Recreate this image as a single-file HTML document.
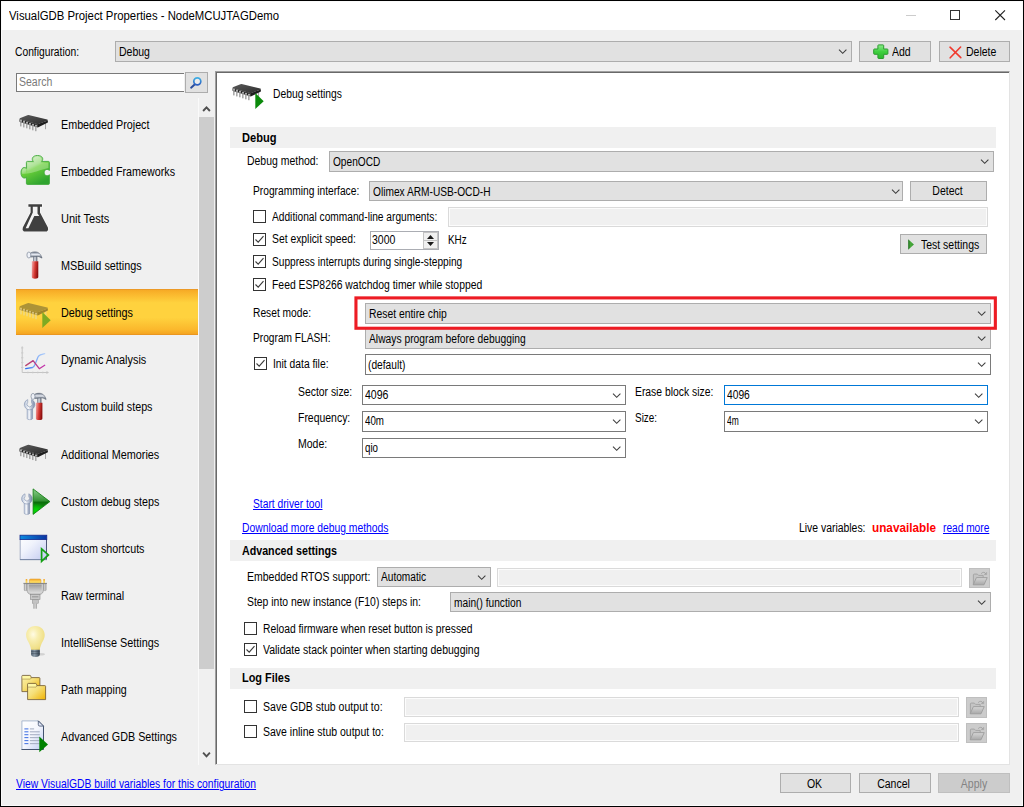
<!DOCTYPE html>
<html lang="en">
<head>
<meta charset="utf-8">
<title>VisualGDB Project Properties - NodeMCUJTAGDemo</title>
<style>
*{box-sizing:border-box;margin:0;padding:0}
html,body{width:1024px;height:807px;overflow:hidden;background:#f0f0f0}
body{font-family:"Liberation Sans",sans-serif;font-size:11px;color:#000;position:relative}
.abs,.t,.cb,.combo,.tb,.btn,.bar,.ico,.item{position:absolute}
.t{white-space:nowrap;line-height:13px;height:13px;font-size:12px;transform:scaleX(var(--k,0.875));transform-origin:0 0;display:inline-block}
.tc{left:0;right:0;top:3px;text-align:center;transform-origin:50% 0;display:block}
svg{overflow:visible}
#win{position:absolute;left:0;top:0;width:1024px;height:807px;border:1px solid #000;pointer-events:none;z-index:50;box-shadow:inset 0 0 0 1px #fafafa}
#title{position:absolute;left:0;top:0;width:1024px;height:30px;background:#fff}
#title .t{--k:0.97;font-size:12px;left:9px;top:9px;line-height:15px;height:15px}
.combo{background:#e1e1e1;border:1px solid #adadad;height:21px}
.combo.w{background:#fff;border-color:#7a7a7a}
.combo.f{background:#fff;border-color:#0078d7}
.combo .t{left:3px;top:3px}
.combo.w .t,.combo.f .t{left:2px}
.combo svg{position:absolute;right:4px;top:7px}
.tb{background:#f0f0f0;border:1px solid #dadada;height:19px;box-shadow:inset 0 0 0 1px #fcfcfc}
.btn{background:#e1e1e1;border:1px solid #adadad;height:21px;text-align:center;line-height:19px;white-space:nowrap}
.btn.dis{background:#cccccc;border-color:#bfbfbf;color:#838383}
.cb{width:13px;height:13px;background:#fff;border:1px solid #333}
.cb svg{position:absolute;left:0;top:0}
.bar{left:230px;width:766px;height:21px;background:#f0f0f0}
.bar .t{left:12px;top:4px;font-weight:bold}
a.t{color:#0000ff;text-decoration:underline}
.item{left:16px;width:183px;height:47px}
.item .t{left:45px;top:17px}
.item.sel{height:46px;width:182px;box-shadow:inset 0 1px 0 #ec9a26,inset 0 -1px 0 #ea9620;background:linear-gradient(#f5a623 0,#f9b32b 8%,#ffd23e 30%,#ffd23e 62%,#fbb82c 88%,#f3a01e 100%)}
.ico{left:3px;top:7px;width:32px;height:32px}
</style>
</head>
<body>
<svg width="0" height="0" style="position:absolute"><defs>
<linearGradient id="chipTop" x1="0" y1="0" x2="1" y2="1"><stop offset="0" stop-color="#5a5a5a"/><stop offset="1" stop-color="#2c2c2c"/></linearGradient>
<linearGradient id="pin" x1="0" y1="0" x2="1" y2="0"><stop offset="0" stop-color="#b4b4b4"/><stop offset="0.45" stop-color="#a0a0a0"/><stop offset="1" stop-color="#ececec"/></linearGradient>
<linearGradient id="pz" x1="0.1" y1="0" x2="0.6" y2="1"><stop offset="0" stop-color="#e4f6dc"/><stop offset="0.42" stop-color="#8fd870"/><stop offset="0.5" stop-color="#6bcf3a"/><stop offset="1" stop-color="#2fa42f"/></linearGradient>
<linearGradient id="hr" x1="0" y1="0" x2="1" y2="0.25"><stop offset="0" stop-color="#f4b0b0"/><stop offset="0.55" stop-color="#d63a34"/><stop offset="1" stop-color="#8e1010"/></linearGradient>
<linearGradient id="hs" x1="0" y1="0" x2="1" y2="0"><stop offset="0" stop-color="#6a7280"/><stop offset="0.45" stop-color="#dfe4ec"/><stop offset="1" stop-color="#4a5260"/></linearGradient>
<linearGradient id="hh" x1="0" y1="0" x2="0" y2="1"><stop offset="0" stop-color="#6e7888"/><stop offset="0.42" stop-color="#e4e8f0"/><stop offset="1" stop-color="#465060"/></linearGradient>
<linearGradient id="wr" x1="0" y1="0" x2="1" y2="0"><stop offset="0" stop-color="#b8c4d8"/><stop offset="0.4" stop-color="#f6f8fc"/><stop offset="1" stop-color="#7484a4"/></linearGradient>
<linearGradient id="pl1" x1="0" y1="0" x2="0" y2="1"><stop offset="0" stop-color="#8ed08e"/><stop offset="0.49" stop-color="#2f8f2f"/><stop offset="0.5" stop-color="#0a6a0a"/><stop offset="1" stop-color="#19b419"/></linearGradient>
<radialGradient id="pl2" cx="0.15" cy="0.72" r="0.6"><stop offset="0" stop-color="#00dc00"/><stop offset="1" stop-color="#00dc00" stop-opacity="0"/></radialGradient>
<linearGradient id="wtb" x1="0" y1="0" x2="1" y2="0"><stop offset="0" stop-color="#0a8ae0"/><stop offset="1" stop-color="#0a34a0"/></linearGradient>
<linearGradient id="wbd" x1="0" y1="0" x2="1" y2="1"><stop offset="0" stop-color="#ffffff"/><stop offset="0.4" stop-color="#f0f3fc"/><stop offset="1" stop-color="#c2caf0"/></linearGradient>
<linearGradient id="gold" x1="0" y1="0" x2="0" y2="1"><stop offset="0" stop-color="#f4a428"/><stop offset="0.75" stop-color="#ffe468"/><stop offset="1" stop-color="#f8c040"/></linearGradient>
<linearGradient id="sb" x1="0" y1="0" x2="0" y2="1"><stop offset="0" stop-color="#9c9c9c"/><stop offset="1" stop-color="#dcdcdc"/></linearGradient>
<linearGradient id="sb2" x1="0" y1="0" x2="1" y2="0"><stop offset="0" stop-color="#a4a4a4"/><stop offset="0.5" stop-color="#d4d4d4"/><stop offset="1" stop-color="#a0a0a0"/></linearGradient>
<radialGradient id="bulb" cx="0.38" cy="0.35" r="0.75"><stop offset="0" stop-color="#fffbe4"/><stop offset="0.35" stop-color="#f8eeb0"/><stop offset="0.8" stop-color="#f0e088"/><stop offset="1" stop-color="#e6cf6c"/></radialGradient>
<linearGradient id="bbase" x1="0" y1="0" x2="1" y2="0"><stop offset="0" stop-color="#5a6a78"/><stop offset="0.4" stop-color="#8a9aa8"/><stop offset="1" stop-color="#34424e"/></linearGradient>
<linearGradient id="fld" x1="0" y1="0" x2="1" y2="1"><stop offset="0" stop-color="#fbf3b0"/><stop offset="0.45" stop-color="#f6e07a"/><stop offset="1" stop-color="#f0b200"/></linearGradient>
<linearGradient id="doc" x1="0" y1="0" x2="1" y2="1"><stop offset="0" stop-color="#ffffff"/><stop offset="0.5" stop-color="#f4f6fd"/><stop offset="1" stop-color="#bccaf2"/></linearGradient>
</defs></svg>
<div id="title"><span class="t" style="--k:0.9452">VisualGDB Project Properties - NodeMCUJTAGDemo</span>
<svg class="abs" style="left:906px;top:15px" width="10" height="1"><rect width="10" height="1" fill="#cccccc"/></svg>
<svg class="abs" style="left:950px;top:10px" width="10" height="10"><rect x="0.5" y="0.5" width="9" height="9" fill="none" stroke="#333" stroke-width="1"/></svg>
<svg class="abs" style="left:995px;top:10px" width="11" height="11"><path d="M0.3 0.3 L10 10 M10 0.3 L0.3 10" stroke="#222" stroke-width="1.1" fill="none"/></svg>
</div>
<span class="t" style="--k:0.8565;left:15px;top:46px">Configuration:</span>
<div class="combo" style="left:115px;top:41px;width:737px"><span class="t" style="left:3px;top:4px">Debug</span><svg width="9" height="6" viewBox="0 0 9 6"><path d="M1 0.6 L4.7 4.3 L8.4 0.6" fill="none" stroke="#3c3c3c" stroke-width="1.05"/></svg></div>
<div class="btn" style="left:859px;top:41px;width:72px"><svg class="abs" style="left:13px;top:2px" width="16" height="16" viewBox="0 0 16 16"><defs><linearGradient id="addg" x1="0" y1="0" x2="0" y2="1"><stop offset="0" stop-color="#8cec8c"/><stop offset="0.5" stop-color="#3fcf3f"/><stop offset="1" stop-color="#2cb62c"/></linearGradient></defs><path d="M5.6 0.9 H10 Q10.7 0.9 10.7 1.6 V5 H14.2 Q14.9 5 14.9 5.7 V9.6 Q14.9 10.3 14.2 10.3 H10.7 V13.8 Q10.7 14.5 10 14.5 H5.6 Q4.9 14.5 4.9 13.8 V10.3 H1.4 Q0.7 10.3 0.7 9.6 V5.7 Q0.7 5 1.4 5 H4.9 V1.6 Q4.9 0.9 5.6 0.9z" fill="url(#addg)" stroke="#2a9c2e" stroke-width="1"/></svg><span class="t" style="left:32px;top:4px">Add</span></div>
<div class="btn" style="left:939px;top:41px;width:71px"><svg class="abs" style="left:9px;top:4px" width="13" height="13" viewBox="0 0 13 13"><path d="M1 1.2 L11.8 11.6 M11.6 1 L1.2 11.8" stroke="#f03a2e" stroke-width="1.6" fill="none" stroke-linecap="round"/></svg><span class="t" style="left:26px;top:4px">Delete</span></div>
<div class="abs" style="left:16px;top:73px;width:168px;height:19px;background:#fff;border:1px solid #7a7a7a;border-right:none"><span class="t" style="left:2px;top:2px;color:#7a7a7a">Search</span></div>
<div class="abs" style="left:185px;top:72px;width:23px;height:21px;background:#e1e1e1;border:1px solid #adadad"><svg class="abs" style="left:3px;top:3px" width="14" height="14" viewBox="0 0 14 14"><defs><linearGradient id="mg" x1="0" y1="0" x2="0" y2="1"><stop offset="0" stop-color="#3fb0e4"/><stop offset="1" stop-color="#2c5cc0"/></linearGradient></defs><path d="M5.9 8.2 L2.1 11.7" stroke="#2a4c9c" stroke-width="1.9" stroke-linecap="round"/><circle cx="8.3" cy="5.3" r="3.5" fill="#ececec" stroke="url(#mg)" stroke-width="1.7"/></svg></div>
<div class="item" style="top:101px"><svg class="ico" viewBox="0 0 32 32"><rect x="1.0" y="12.2" width="2" height="6.2" fill="url(#pin)" opacity="1"/><rect x="4.0" y="13.2" width="2" height="6.2" fill="url(#pin)" opacity="1"/><rect x="7.0" y="14.1" width="2" height="6.2" fill="url(#pin)" opacity="1"/><rect x="10.0" y="15.1" width="2" height="6.2" fill="url(#pin)" opacity="1"/><rect x="13.0" y="16.1" width="2" height="6.2" fill="url(#pin)" opacity="1"/><rect x="16.0" y="17.0" width="2" height="6.2" fill="url(#pin)" opacity="1"/><rect x="26.0" y="14.6" width="1.5" height="6.6" fill="url(#pin)" opacity="1"/><path d="M0.5 11.2 L18.8 16.0 L18.8 19.6 L0.5 13.8z" fill="#262626"/><path d="M18.8 16.0 L28.9 12.4 L28.9 14.6 L18.8 19.6z" fill="#1e1e1e"/><path d="M0.5 11.2 Q0.4 10.4 1.4 10.1 L8.4 7.3 Q9.4 6.9 10.6 7.3 L28.2 11.6 Q29.2 12 28.9 12.6 L18.8 16.2z" fill="url(#chipTop)"/><rect x="1.0" y="11.9" width="2" height="1.9" fill="#d4d4d4" opacity="0.75"/><rect x="4.0" y="12.9" width="2" height="1.9" fill="#d4d4d4" opacity="0.75"/><rect x="7.0" y="13.8" width="2" height="1.9" fill="#d4d4d4" opacity="0.75"/><rect x="10.0" y="14.8" width="2" height="1.9" fill="#d4d4d4" opacity="0.75"/><rect x="13.0" y="15.8" width="2" height="1.9" fill="#d4d4d4" opacity="0.75"/><rect x="16.0" y="16.8" width="2" height="1.9" fill="#d4d4d4" opacity="0.75"/></svg><span class="t" style="--k:0.8963;top:18px">Embedded Project</span></div>
<div class="item" style="top:148px"><svg class="ico" viewBox="0 0 32 32"><path d="M8.4 6.4 H14.3 C12.2 4.4 13.2 0.5 18.5 0.5 C23.8 0.5 24.8 4.4 22.7 6.4 H29.4 Q30.4 6.4 30.4 7.4 V15.4 C28.4 13.6 25.2 14.3 25.2 17.6 C25.2 20.9 28.4 21.5 30.4 19.8 V28.4 Q30.4 29.4 29.4 29.4 H8.4 Q7.4 29.4 7.4 28.4 V22.2 C5.4 24.2 2 22.8 2 17.7 C2 12.6 5.4 11.4 7.4 13.3 V7.4 Q7.4 6.4 8.4 6.4z" fill="url(#pz)" stroke="#3fa83a" stroke-width="0.9"/><path d="M8.4 7.4 H15.4 C13.6 5 14.6 1.6 18.5 1.6 C22.4 1.6 23.4 5 21.6 7.4 H29.4 V13 C22 14.5 14 18 8 18.5 L7.4 14.6 C5.6 12.6 3 13.6 3 17.6 L3.4 19 C5 19 6.6 18.8 8 18.5z" fill="#ffffff" opacity="0.28"/></svg><span class="t" style="--k:0.8949;top:18px">Embedded Frameworks</span></div>
<div class="item" style="top:195px"><svg class="ico" viewBox="0 0 32 32"><path d="M9.4 2.2 H23 V4.7 H21 V10.4 L28.9 25.4 Q29.8 27.6 27.8 29.5 H4.9 Q2.9 27.6 3.8 25.4 L11.6 10.4 V4.7 H9.4z" fill="#404040" stroke="#fafafa" stroke-width="1.2" paint-order="stroke"/><path d="M13.8 4.7 H18.5 V11.4 L20.3 13.9 H15.3 L9.4 26.3 H6.7 L13.8 10.4z" fill="#f4f4f4"/></svg><span class="t" style="--k:0.9196;top:18px">Unit Tests</span></div>
<div class="item" style="top:242px"><svg class="ico" viewBox="0 0 32 32"><g transform="translate(0 0)"><path d="M14.1 5 H18.3 V12.6 H14.1z" fill="url(#hs)"/><path d="M11.4 4.2 C13 3 14.4 2.9 16 2.9 C19.4 2.8 21.8 5 23 9.1 C21.4 8.2 19.6 7.4 18.3 7.4 L14.1 7.8 C13 8 12 8.2 11.4 8z" fill="url(#hh)" stroke="#56606e" stroke-width="0.6"/><ellipse cx="9.9" cy="6" rx="2" ry="3" fill="#eef1f7" stroke="#7c8698" stroke-width="0.7"/><path d="M12.8 12.3 H19.3 V28 Q19.3 29.7 16 29.7 Q12.8 29.7 12.8 28z" fill="url(#hr)"/></g></svg><span class="t" style="--k:0.9035;top:18px">MSBuild settings</span></div>
<div class="item sel" style="top:289px"><svg class="ico" viewBox="0 0 32 32"><g opacity="0.55"><rect x="1.0" y="12.2" width="2" height="6.2" fill="#e8dca0" opacity="1"/><rect x="4.0" y="13.2" width="2" height="6.2" fill="#e8dca0" opacity="1"/><rect x="7.0" y="14.1" width="2" height="6.2" fill="#e8dca0" opacity="1"/><rect x="10.0" y="15.1" width="2" height="6.2" fill="#e8dca0" opacity="1"/><rect x="13.0" y="16.1" width="2" height="6.2" fill="#e8dca0" opacity="1"/><rect x="16.0" y="17.0" width="2" height="6.2" fill="#e8dca0" opacity="1"/><rect x="26.0" y="14.6" width="1.5" height="6.6" fill="#e8dca0" opacity="1"/><path d="M0.5 11.2 L18.8 16.0 L18.8 19.6 L0.5 13.8z" fill="#5a5026"/><path d="M18.8 16.0 L28.9 12.4 L28.9 14.6 L18.8 19.6z" fill="#4e4520"/><path d="M0.5 11.2 Q0.4 10.4 1.4 10.1 L8.4 7.3 Q9.4 6.9 10.6 7.3 L28.2 11.6 Q29.2 12 28.9 12.6 L18.8 16.2z" fill="#6a6032"/><rect x="1.0" y="11.9" width="2" height="1.9" fill="#d4d4d4" opacity="0.75"/><rect x="4.0" y="12.9" width="2" height="1.9" fill="#d4d4d4" opacity="0.75"/><rect x="7.0" y="13.8" width="2" height="1.9" fill="#d4d4d4" opacity="0.75"/><rect x="10.0" y="14.8" width="2" height="1.9" fill="#d4d4d4" opacity="0.75"/><rect x="13.0" y="15.8" width="2" height="1.9" fill="#d4d4d4" opacity="0.75"/><rect x="16.0" y="16.8" width="2" height="1.9" fill="#d4d4d4" opacity="0.75"/></g><path d="M23.3 16.1 L31.7 24.3 L23.3 31.9z" fill="#7eaa22"/></svg><span class="t" style="--k:0.8993;top:18px">Debug settings</span></div>
<div class="item" style="top:336px"><svg class="ico" viewBox="0 0 32 32"><path d="M3.2 3.4 V29.5 H29.2" fill="none" stroke="#c4c4c4" stroke-width="1"/><path d="M2 4.9h2.4M2 9.9h2.4M2 14.8h2.4M2 19.6h2.4M2 24.5h2.4M8.9 28.6v1.8M13.8 28.6v1.8M18.8 28.6v1.8M23.8 28.6v1.8" stroke="#cacaca" stroke-width="0.9"/><path d="M27.4 28.4 L29.4 29.5 L27.4 30.6" fill="none" stroke="#c4c4c4" stroke-width="0.8"/><defs><linearGradient id="gb" x1="0" y1="0" x2="1" y2="0"><stop offset="0" stop-color="#2a6cf0"/><stop offset="0.5" stop-color="#7aa8f6"/><stop offset="1" stop-color="#b4d0fa"/></linearGradient><linearGradient id="gm" x1="0" y1="0" x2="1" y2="0"><stop offset="0" stop-color="#b84870"/><stop offset="0.5" stop-color="#b83a84"/><stop offset="1" stop-color="#c432b0"/></linearGradient></defs><path d="M6.7 25.7 L13.6 24.5 Q15 24 16 21.6 L19 14 Q19.8 12.3 21.4 11.8 L25.7 10.6" fill="none" stroke="url(#gb)" stroke-width="1.3" stroke-linecap="round"/><path d="M6.7 22.6 L14.1 17.6 L20.3 25.7 L25.7 22.3" fill="none" stroke="url(#gm)" stroke-width="1.3" stroke-linecap="round" stroke-linejoin="round"/></svg><span class="t" style="--k:0.9066;top:18px">Dynamic Analysis</span></div>
<div class="item" style="top:383px"><svg class="ico" viewBox="0 0 32 32"><g transform="translate(4.1 0.4)"><path d="M14.1 5 H18.3 V12.6 H14.1z" fill="url(#hs)"/><path d="M11.4 4.2 C13 3 14.4 2.9 16 2.9 C19.4 2.8 21.8 5 23 9.1 C21.4 8.2 19.6 7.4 18.3 7.4 L14.1 7.8 C13 8 12 8.2 11.4 8z" fill="url(#hh)" stroke="#56606e" stroke-width="0.6"/><ellipse cx="9.9" cy="6" rx="2" ry="3" fill="#eef1f7" stroke="#7c8698" stroke-width="0.7"/><path d="M12.8 12.3 H19.3 V28 Q19.3 29.7 16 29.7 Q12.8 29.7 12.8 28z" fill="url(#hr)"/></g><path d="M8.1 18.2 V28.5 Q8.1 29.7 10.85 29.7 Q13.6 29.7 13.6 28.5 V18.2z" fill="url(#wr)" stroke="#8090ae" stroke-width="0.5"/><path d="M8.7 9.6 A5.3 5.3 0 1 0 12.5 9.6 L12.5 12.399999999999999 A2.6 2.6 0 1 1 8.7 12.399999999999999z" fill="url(#wr)" stroke="#8090ae" stroke-width="0.6"/></svg><span class="t" style="--k:0.8966;top:18px">Custom build steps</span></div>
<div class="item" style="top:430px"><svg class="ico" viewBox="0 0 32 32"><g transform="translate(0 0.75)"><rect x="1.0" y="12.2" width="2" height="6.2" fill="url(#pin)" opacity="1"/><rect x="4.0" y="13.2" width="2" height="6.2" fill="url(#pin)" opacity="1"/><rect x="7.0" y="14.1" width="2" height="6.2" fill="url(#pin)" opacity="1"/><rect x="10.0" y="15.1" width="2" height="6.2" fill="url(#pin)" opacity="1"/><rect x="13.0" y="16.1" width="2" height="6.2" fill="url(#pin)" opacity="1"/><rect x="16.0" y="17.0" width="2" height="6.2" fill="url(#pin)" opacity="1"/><rect x="26.0" y="14.6" width="1.5" height="6.6" fill="url(#pin)" opacity="1"/><path d="M0.5 11.2 L18.8 16.0 L18.8 19.6 L0.5 13.8z" fill="#262626"/><path d="M18.8 16.0 L28.9 12.4 L28.9 14.6 L18.8 19.6z" fill="#1e1e1e"/><path d="M0.5 11.2 Q0.4 10.4 1.4 10.1 L8.4 7.3 Q9.4 6.9 10.6 7.3 L28.2 11.6 Q29.2 12 28.9 12.6 L18.8 16.2z" fill="url(#chipTop)"/><rect x="1.0" y="11.9" width="2" height="1.9" fill="#d4d4d4" opacity="0.75"/><rect x="4.0" y="12.9" width="2" height="1.9" fill="#d4d4d4" opacity="0.75"/><rect x="7.0" y="13.8" width="2" height="1.9" fill="#d4d4d4" opacity="0.75"/><rect x="10.0" y="14.8" width="2" height="1.9" fill="#d4d4d4" opacity="0.75"/><rect x="13.0" y="15.8" width="2" height="1.9" fill="#d4d4d4" opacity="0.75"/><rect x="16.0" y="16.8" width="2" height="1.9" fill="#d4d4d4" opacity="0.75"/></g></svg><span class="t" style="--k:0.9037;top:19px">Additional Memories</span></div>
<div class="item" style="top:477px"><svg class="ico" viewBox="0 0 32 32"><path d="M5.2 18.400000000000002 V29.2 Q5.2 30.4 7.9 30.4 Q10.6 30.4 10.6 29.2 V18.400000000000002z" fill="url(#wr)" stroke="#8090ae" stroke-width="0.5"/><path d="M6.0 9.8 A5.3 5.3 0 1 0 9.8 9.8 L9.8 12.600000000000001 A2.6 2.6 0 1 1 6.0 12.600000000000001z" fill="url(#wr)" stroke="#8090ae" stroke-width="0.6"/><path d="M14.1 4.9 L30.9 17.6 L14.1 30.4z" fill="url(#pl1)" stroke="#0a7a0a" stroke-width="0.8" stroke-linejoin="round"/><path d="M14.5 17.6 H30.3 L14.5 29.6z" fill="url(#pl2)"/></svg><span class="t" style="--k:0.8927;top:19px">Custom debug steps</span></div>
<div class="item" style="top:524px"><svg class="ico" viewBox="0 0 32 32"><rect x="1.2" y="4.4" width="26.3" height="24.1" fill="url(#wbd)"/><path d="M1.2 8.6 V28.5" stroke="#a4aec6" stroke-width="1"/><path d="M27.5 8.6 V29" stroke="#4c5676" stroke-width="1"/><path d="M0.9 28.6 H28" stroke="#7484a4" stroke-width="1.1"/><rect x="1" y="4.2" width="26.8" height="4.4" fill="url(#wtb)" stroke="#14288c" stroke-width="0.8"/><path d="M22.6 17.9 L29.4 23.9 L22.6 30.3z" fill="#c8d4f8" fill-opacity="0.6" stroke="#14a014" stroke-width="1.7" stroke-linejoin="miter"/></svg><span class="t" style="--k:0.8942;top:19px">Custom shortcuts</span></div>
<div class="item" style="top:571px"><svg class="ico" viewBox="0 0 32 32"><rect x="6.6" y="1.1" width="1.8" height="4.2" rx="0.6" fill="url(#gold)"/><rect x="24.2" y="1.1" width="1.8" height="4.2" rx="0.6" fill="url(#gold)"/><rect x="10.4" y="1" width="11.6" height="4.4" rx="1.2" fill="url(#gold)" stroke="#e09a28" stroke-width="0.5"/><path d="M5.2 5.7 H8.1 V12 Q8.1 12.6 7.4 12.6 H5.9 Q5.2 12.6 5.2 12z" fill="url(#sb2)" stroke="#8c8c8c" stroke-width="0.4"/><path d="M24.5 5.7 H27.2 V12 Q27.2 12.6 26.5 12.6 H25.2 Q24.5 12.6 24.5 12z" fill="url(#sb2)" stroke="#8c8c8c" stroke-width="0.4"/><path d="M8.1 5.7 H24.4 V11.5 Q24.4 16.3 20.4 16.3 H12.1 Q8.1 16.3 8.1 11.5z" fill="#d2d2d2" stroke="#8a8a8a" stroke-width="0.6"/><path d="M9.8 6.6 H22.7 V11.4 Q22.7 15 19.6 15 H12.9 Q9.8 15 9.8 11.4z" fill="url(#sb)"/><path d="M4.4 5.4 H28" stroke="#7c7c7c" stroke-width="0.9"/><rect x="11.4" y="16.6" width="9.6" height="4.9" fill="#c8c8c8" stroke="#8a8a8a" stroke-width="0.6"/><rect x="13" y="18.2" width="6.4" height="1.2" fill="#9c9c9c"/><rect x="13.4" y="21.8" width="5.9" height="3.4" fill="#c4c4c4" stroke="#8a8a8a" stroke-width="0.5"/><rect x="14.3" y="25.5" width="3.7" height="5.2" fill="url(#sb2)"/></svg><span class="t" style="--k:0.9032;top:19px">Raw terminal</span></div>
<div class="item" style="top:618px"><svg class="ico" viewBox="0 0 32 32"><ellipse cx="21" cy="29.3" rx="5" ry="1.2" fill="#000" opacity="0.12"/><path d="M16.4 1 C10.2 1 7.1 5.6 7.1 10 C7.1 15.4 11.6 18.6 12.1 24.9 H20.8 C21.3 18.6 25.7 15.4 25.7 10 C25.7 5.6 22.6 1 16.4 1z" fill="url(#bulb)"/><path d="M12.1 24.7 H20.8 V29.6 Q20.8 31.9 16.5 31.9 Q12.1 31.9 12.1 29.6z" fill="url(#bbase)"/><path d="M12.1 26.6 H20.8 M12.1 28.6 H20.8" stroke="#2c3844" stroke-width="0.6" opacity="0.7"/></svg><span class="t" style="--k:0.9036;top:19px">IntelliSense Settings</span></div>
<div class="item" style="top:665px"><svg class="ico" viewBox="0 0 32 32"><path d="M2.9 4.2 Q2.9 3.4 3.7 3.4 H10.8 Q11.6 3.4 11.8 4.2 L12.200000000000001 5.6 H20.099999999999998 Q20.9 5.6 20.9 6.4 V19.599999999999998 H2.9z" fill="url(#fld)" stroke="#6c5630" stroke-width="0.8" stroke-linejoin="round"/><path d="M3.5 4.1 H11.1 V6.699999999999999 H3.5z" fill="#fffaa8" opacity="0.85"/><path d="M3.3 7.1 H11.3 L12.3 6.0" fill="none" stroke="#a08a4c" stroke-width="0.6"/><path d="M8.6 12.200000000000001 Q8.6 11.4 9.4 11.4 H16.5 Q17.299999999999997 11.4 17.5 12.200000000000001 L17.9 13.600000000000001 H25.799999999999997 Q26.6 13.600000000000001 26.6 14.4 V27.6 H8.6z" fill="url(#fld)" stroke="#6c5630" stroke-width="0.8" stroke-linejoin="round"/><path d="M9.2 12.1 H16.799999999999997 V14.7 H9.2z" fill="#fffaa8" opacity="0.85"/><path d="M9.0 15.100000000000001 H17.0 L18.0 14.0" fill="none" stroke="#a08a4c" stroke-width="0.6"/></svg><span class="t" style="--k:0.8878;top:19px">Path mapping</span></div>
<div class="item" style="top:713px"><svg class="ico" viewBox="0 0 32 32"><path d="M2.9 0.9 H19.3 L24.5 6.1 V29.5 H2.9z" fill="url(#doc)"/><path d="M2.9 29.8 V0.9 H19.3" fill="none" stroke="#a4b4cc" stroke-width="0.9"/><path d="M19.3 0.9 L24.5 6.1 V29.5 H2.5" fill="none" stroke="#42526e" stroke-width="1"/><path d="M19.3 0.9 V4.6 Q19.3 6.1 20.8 6.1 H24.5z" fill="#dfe6f6" stroke="#42526e" stroke-width="0.8"/><path d="M5.4 8.9 H9.4" stroke="#4a78e4" stroke-width="1.1"/><path d="M10.9 8.9 H15.1" stroke="#a8b0c4" stroke-width="1.1"/><path d="M5.4 11.8 H9.4" stroke="#4a78e4" stroke-width="1.1"/><path d="M10.9 11.8 H20.8" stroke="#a8b0c4" stroke-width="1.1"/><path d="M5.4 14.7 H9.4" stroke="#4a78e4" stroke-width="1.1"/><path d="M10.9 14.7 H20.8" stroke="#a8b0c4" stroke-width="1.1"/><path d="M5.4 17.6 H9.4" stroke="#4a78e4" stroke-width="1.1"/><path d="M10.9 17.6 H20.8" stroke="#a8b0c4" stroke-width="1.1"/><path d="M5.4 20.6 H9.4" stroke="#4a78e4" stroke-width="1.1"/><path d="M10.9 20.6 H20.8" stroke="#a8b0c4" stroke-width="1.1"/><path d="M5.4 23.6 H9.4" stroke="#4a78e4" stroke-width="1.1"/><path d="M10.9 23.6 H20.8" stroke="#a8b0c4" stroke-width="1.1"/><path d="M20.3 16.6 L29 24.5 L20.3 32.2z" fill="#008200"/></svg><span class="t" style="--k:0.8964;top:18px">Advanced GDB Settings</span></div>
<div class="abs" style="left:198px;top:98px;width:17px;height:667px;background:#f0f0f0;border-left:1px solid #fafafa"></div>
<div class="abs" style="left:199px;top:117px;width:15px;height:552px;background:#cdcdcd"></div>
<svg class="abs" style="left:202px;top:105px" width="9" height="7" viewBox="0 0 9 7"><path d="M1.1 6 L4.5 2.3 L7.9 6" fill="none" stroke="#505050" stroke-width="1.9"/></svg>
<svg class="abs" style="left:202px;top:751px" width="9" height="7" viewBox="0 0 9 7"><path d="M1.1 1.6 L4.5 5.3 L7.9 1.6" fill="none" stroke="#505050" stroke-width="1.9"/></svg>
<div class="abs" style="left:215px;top:71px;width:795px;height:694px;background:#fff;border:1px solid #a0a0a0;border-right-color:#e3e3e3;border-bottom-color:#e3e3e3"></div>
<div class="abs" style="left:216px;top:72px;width:793px;height:692px;border-left:1px solid #696969;border-top:1px solid #696969"></div>
<svg class="abs" style="left:231.5px;top:77px" width="32" height="32" viewBox="0 0 32 32"><rect x="1.0" y="12.2" width="2" height="6.2" fill="url(#pin)" opacity="1"/><rect x="4.0" y="13.2" width="2" height="6.2" fill="url(#pin)" opacity="1"/><rect x="7.0" y="14.1" width="2" height="6.2" fill="url(#pin)" opacity="1"/><rect x="10.0" y="15.1" width="2" height="6.2" fill="url(#pin)" opacity="1"/><rect x="13.0" y="16.1" width="2" height="6.2" fill="url(#pin)" opacity="1"/><rect x="16.0" y="17.0" width="2" height="6.2" fill="url(#pin)" opacity="1"/><rect x="26.0" y="14.6" width="1.5" height="6.6" fill="url(#pin)" opacity="1"/><path d="M0.5 11.2 L18.8 16.0 L18.8 19.6 L0.5 13.8z" fill="#262626"/><path d="M18.8 16.0 L28.9 12.4 L28.9 14.6 L18.8 19.6z" fill="#1e1e1e"/><path d="M0.5 11.2 Q0.4 10.4 1.4 10.1 L8.4 7.3 Q9.4 6.9 10.6 7.3 L28.2 11.6 Q29.2 12 28.9 12.6 L18.8 16.2z" fill="url(#chipTop)"/><rect x="1.0" y="11.9" width="2" height="1.9" fill="#d4d4d4" opacity="0.75"/><rect x="4.0" y="12.9" width="2" height="1.9" fill="#d4d4d4" opacity="0.75"/><rect x="7.0" y="13.8" width="2" height="1.9" fill="#d4d4d4" opacity="0.75"/><rect x="10.0" y="14.8" width="2" height="1.9" fill="#d4d4d4" opacity="0.75"/><rect x="13.0" y="15.8" width="2" height="1.9" fill="#d4d4d4" opacity="0.75"/><rect x="16.0" y="16.8" width="2" height="1.9" fill="#d4d4d4" opacity="0.75"/><path d="M23.3 16.1 L31.7 24.3 L23.3 31.9z" fill="#0b8a0b"/></svg>
<span class="t" style="--k:0.8618;left:273px;top:88px">Debug settings</span>
<div class="bar" style="top:127px"><span class="t" style="--k:0.9238;top:5px">Debug</span></div>
<span class="t" style="--k:0.8713;left:247px;top:155px">Debug method:</span>
<div class="combo" style="left:329px;top:151px;width:665px;height:21px"><span class="t" style="--k:0.8433;top:4px">OpenOCD</span><svg width="9" height="6" viewBox="0 0 9 6"><path d="M1 0.6 L4.7 4.3 L8.4 0.6" fill="none" stroke="#3c3c3c" stroke-width="1.05"/></svg></div>
<span class="t" style="--k:0.8519;left:253px;top:185px">Programming interface:</span>
<div class="combo" style="left:369px;top:181px;width:534px;height:20px"><span class="t" style="--k:0.8473;top:4px">Olimex ARM-USB-OCD-H</span><svg style="right:2px" width="9" height="6" viewBox="0 0 9 6"><path d="M1 0.6 L4.7 4.3 L8.4 0.6" fill="none" stroke="#3c3c3c" stroke-width="1.05"/></svg></div>
<div class="btn" style="left:910px;top:181px;width:77px;height:20px"><span class="t tc" style="right:2px">Detect</span></div>
<div class="cb" style="left:253px;top:210px"></div>
<span class="t" style="--k:0.8485;left:272px;top:211px">Additional command-line arguments:</span>
<div class="tb" style="left:448px;top:207px;width:540px;height:20px"></div>
<div class="cb" style="left:253px;top:233px"><svg width="11" height="11" viewBox="0 0 11 11"><path d="M1.5 5.5 L4.2 8.2 L9.5 2.2" fill="none" stroke="#3a3a3a" stroke-width="1.1"/></svg></div>
<span class="t" style="--k:0.8625;left:272px;top:233px">Set explicit speed:</span>
<div class="abs" style="left:370px;top:231px;width:69px;height:19px;background:#fff;border:1px solid #abadb3"><span class="t" style="left:1px;top:2px">3000</span><div class="abs" style="left:52px;top:0;width:15px;height:9px;background:#f0f0f0;border:1px solid #c4c4c4"><svg class="abs" style="left:3px;top:2px" width="7" height="4" viewBox="0 0 7 4"><path d="M0 4 L3.5 0 L7 4z" fill="#1a1a1a"/></svg></div><div class="abs" style="left:52px;top:9px;width:15px;height:8px;background:#f0f0f0;border:1px solid #c4c4c4;border-top:none"><svg class="abs" style="left:3px;top:1px" width="7" height="4" viewBox="0 0 7 4"><path d="M0 0 L3.5 4 L7 0z" fill="#1a1a1a"/></svg></div></div>
<span class="t" style="--k:0.8248;left:448px;top:234px">KHz</span>
<div class="btn" style="left:900px;top:234px;width:87px;height:20px"><svg class="abs" style="left:7px;top:4px" width="6" height="11" viewBox="0 0 6 11"><defs><linearGradient id="tsg" x1="0" y1="0" x2="1" y2="0"><stop offset="0" stop-color="#1e6e1e"/><stop offset="0.45" stop-color="#4cae3c"/><stop offset="1" stop-color="#2e8e2a"/></linearGradient></defs><path d="M0.2 0.2 L5.9 5.5 L0.2 10.8z" fill="url(#tsg)"/></svg><span class="t" style="--k:0.8725;left:20px;top:4px">Test settings</span></div>
<div class="cb" style="left:253px;top:255px"><svg width="11" height="11" viewBox="0 0 11 11"><path d="M1.5 5.5 L4.2 8.2 L9.5 2.2" fill="none" stroke="#3a3a3a" stroke-width="1.1"/></svg></div>
<span class="t" style="--k:0.8463;left:272px;top:256px">Suppress interrupts during single-stepping</span>
<div class="cb" style="left:253px;top:278px"><svg width="11" height="11" viewBox="0 0 11 11"><path d="M1.5 5.5 L4.2 8.2 L9.5 2.2" fill="none" stroke="#3a3a3a" stroke-width="1.1"/></svg></div>
<span class="t" style="--k:0.8659;left:272px;top:279px">Feed ESP8266 watchdog timer while stopped</span>
<span class="t" style="--k:0.8524;left:253px;top:307px">Reset mode:</span>
<div class="combo" style="left:365px;top:328px;width:626px;height:21px"><span class="t" style="--k:0.8568;top:4px">Always program before debugging</span><svg width="9" height="6" viewBox="0 0 9 6"><path d="M1 0.6 L4.7 4.3 L8.4 0.6" fill="none" stroke="#3c3c3c" stroke-width="1.05"/></svg></div>
<div class="abs" style="left:355px;top:297px;width:641px;height:32px;background:#fff"></div>
<svg class="abs" style="left:0;top:0" width="1024" height="400"><rect x="355.95" y="297.9" width="639.4" height="30.35" fill="none" stroke="#ed1c24" stroke-width="3.1"/></svg>
<div class="combo" style="left:365px;top:303px;width:626px;height:21px"><span class="t" style="--k:0.8634;top:4px">Reset entire chip</span><svg width="9" height="6" viewBox="0 0 9 6"><path d="M1 0.6 L4.7 4.3 L8.4 0.6" fill="none" stroke="#3c3c3c" stroke-width="1.05"/></svg></div>
<span class="t" style="--k:0.8483;left:253px;top:332px">Program FLASH:</span>
<div class="cb" style="left:254px;top:357px"><svg width="11" height="11" viewBox="0 0 11 11"><path d="M1.5 5.5 L4.2 8.2 L9.5 2.2" fill="none" stroke="#3a3a3a" stroke-width="1.1"/></svg></div>
<span class="t" style="--k:0.8576;left:273px;top:358px">Init data file:</span>
<div class="combo w" style="left:365px;top:354px;width:626px;height:21px"><span class="t" style="--k:0.8517;top:4px">(default)</span><svg width="9" height="6" viewBox="0 0 9 6"><path d="M1 0.6 L4.7 4.3 L8.4 0.6" fill="none" stroke="#3c3c3c" stroke-width="1.05"/></svg></div>
<span class="t" style="--k:0.8652;left:298px;top:386px">Sector size:</span>
<div class="combo w" style="left:362px;top:385px;width:264px;height:20px"><span class="t" style="--k:0.88;top:3px">4096</span><svg width="9" height="6" viewBox="0 0 9 6"><path d="M1 0.6 L4.7 4.3 L8.4 0.6" fill="none" stroke="#3c3c3c" stroke-width="1.05"/></svg></div>
<span class="t" style="--k:0.8633;left:635px;top:386px">Erase block size:</span>
<div class="combo f" style="left:724px;top:385px;width:264px;height:20px"><span class="t" style="--k:0.8538;top:3px">4096</span><svg width="9" height="6" viewBox="0 0 9 6"><path d="M1 0.6 L4.7 4.3 L8.4 0.6" fill="none" stroke="#3c3c3c" stroke-width="1.05"/></svg></div>
<span class="t" style="--k:0.8704;left:298px;top:412px">Frequency:</span>
<div class="combo w" style="left:362px;top:411px;width:264px;height:21px"><span class="t" style="--k:0.8139;top:3px">40m</span><svg width="9" height="6" viewBox="0 0 9 6"><path d="M1 0.6 L4.7 4.3 L8.4 0.6" fill="none" stroke="#3c3c3c" stroke-width="1.05"/></svg></div>
<span class="t" style="--k:0.8281;left:635px;top:412px">Size:</span>
<div class="combo w" style="left:724px;top:411px;width:264px;height:21px"><span class="t" style="--k:0.7018;top:3px">4m</span><svg width="9" height="6" viewBox="0 0 9 6"><path d="M1 0.6 L4.7 4.3 L8.4 0.6" fill="none" stroke="#3c3c3c" stroke-width="1.05"/></svg></div>
<span class="t" style="--k:0.8768;left:298px;top:438px">Mode:</span>
<div class="combo w" style="left:362px;top:438px;width:264px;height:20px"><span class="t" style="--k:0.8117;top:3px">qio</span><svg width="9" height="6" viewBox="0 0 9 6"><path d="M1 0.6 L4.7 4.3 L8.4 0.6" fill="none" stroke="#3c3c3c" stroke-width="1.05"/></svg></div>
<a class="t" style="--k:0.8541;left:253px;top:498px">Start driver tool</a>
<a class="t" style="--k:0.8612;left:242px;top:522px">Download more debug methods</a>
<span class="t" style="--k:0.8668;left:799px;top:522px">Live variables:</span>
<span class="t" style="--k:0.979;left:872px;top:522px;color:#ff0000;font-weight:bold">unavailable</span>
<a class="t" style="--k:0.8464;left:943px;top:522px">read more</a>
<div class="bar" style="top:540px"><span class="t" style="--k:0.8903;top:5px">Advanced settings</span></div>
<span class="t" style="left:247px;top:571px">Embedded RTOS support:</span>
<div class="combo" style="left:377px;top:567px;width:114px;height:20px"><span class="t" style="--k:0.8433;top:3px">Automatic</span><svg width="9" height="6" viewBox="0 0 9 6"><path d="M1 0.6 L4.7 4.3 L8.4 0.6" fill="none" stroke="#3c3c3c" stroke-width="1.05"/></svg></div>
<div class="tb" style="left:497px;top:568px;width:465px;height:19px"></div>
<div class="btn dis" style="left:969px;top:568px;width:21px;height:20px"><svg class="abs" style="left:2px;top:2px" width="16" height="16" viewBox="0 0 16 16"><defs><linearGradient id="fgr" x1="0" y1="0" x2="0" y2="1"><stop offset="0" stop-color="#d6d6d6"/><stop offset="1" stop-color="#a8a8a8"/></linearGradient></defs><path d="M1.4 13.6 V3.9 Q1.4 3.1 2.2 3.1 H5.4 L6.6 4.4 H11.2 V6.6" fill="#c4c4c4" stroke="#a2a2a2" stroke-width="0.9"/><path d="M1.2 13.8 L4.4 6.6 H15.2 L12 13.8z" fill="url(#fgr)" stroke="#9c9c9c" stroke-width="0.9" stroke-linejoin="round"/><path d="M9.2 2.6 C10.4 0.9 13 0.9 13.9 3" fill="none" stroke="#a4a4a4" stroke-width="1"/><path d="M12.2 3.6 H14.6 V1.2" fill="none" stroke="#a4a4a4" stroke-width="0.9"/></svg></div>
<span class="t" style="--k:0.8666;left:247px;top:596px">Step into new instance (F10) steps in:</span>
<div class="combo" style="left:450px;top:592px;width:541px;height:20px"><span class="t" style="--k:0.8479;top:4px">main() function</span><svg width="9" height="6" viewBox="0 0 9 6"><path d="M1 0.6 L4.7 4.3 L8.4 0.6" fill="none" stroke="#3c3c3c" stroke-width="1.05"/></svg></div>
<div class="cb" style="left:244px;top:622px"></div>
<span class="t" style="--k:0.8582;left:263px;top:623px">Reload firmware when reset button is pressed</span>
<div class="cb" style="left:244px;top:643px"><svg width="11" height="11" viewBox="0 0 11 11"><path d="M1.5 5.5 L4.2 8.2 L9.5 2.2" fill="none" stroke="#3a3a3a" stroke-width="1.1"/></svg></div>
<span class="t" style="--k:0.8731;left:263px;top:644px">Validate stack pointer when starting debugging</span>
<div class="bar" style="top:668px"><span class="t" style="--k:0.9113;top:4px">Log Files</span></div>
<div class="cb" style="left:244px;top:700px"></div>
<span class="t" style="--k:0.8789;left:263px;top:701px">Save GDB stub output to:</span>
<div class="tb" style="left:404px;top:697px;width:555px;height:20px"></div>
<div class="btn dis" style="left:966px;top:697px;width:21px;height:21px"><svg class="abs" style="left:2px;top:2px" width="16" height="16" viewBox="0 0 16 16"><defs><linearGradient id="fgr" x1="0" y1="0" x2="0" y2="1"><stop offset="0" stop-color="#d6d6d6"/><stop offset="1" stop-color="#a8a8a8"/></linearGradient></defs><path d="M1.4 13.6 V3.9 Q1.4 3.1 2.2 3.1 H5.4 L6.6 4.4 H11.2 V6.6" fill="#c4c4c4" stroke="#a2a2a2" stroke-width="0.9"/><path d="M1.2 13.8 L4.4 6.6 H15.2 L12 13.8z" fill="url(#fgr)" stroke="#9c9c9c" stroke-width="0.9" stroke-linejoin="round"/><path d="M9.2 2.6 C10.4 0.9 13 0.9 13.9 3" fill="none" stroke="#a4a4a4" stroke-width="1"/><path d="M12.2 3.6 H14.6 V1.2" fill="none" stroke="#a4a4a4" stroke-width="0.9"/></svg></div>
<div class="cb" style="left:244px;top:725px"></div>
<span class="t" style="--k:0.8748;left:263px;top:726px">Save inline stub output to:</span>
<div class="tb" style="left:404px;top:723px;width:555px;height:19px"></div>
<div class="btn dis" style="left:966px;top:723px;width:21px;height:20px"><svg class="abs" style="left:2px;top:2px" width="16" height="16" viewBox="0 0 16 16"><defs><linearGradient id="fgr" x1="0" y1="0" x2="0" y2="1"><stop offset="0" stop-color="#d6d6d6"/><stop offset="1" stop-color="#a8a8a8"/></linearGradient></defs><path d="M1.4 13.6 V3.9 Q1.4 3.1 2.2 3.1 H5.4 L6.6 4.4 H11.2 V6.6" fill="#c4c4c4" stroke="#a2a2a2" stroke-width="0.9"/><path d="M1.2 13.8 L4.4 6.6 H15.2 L12 13.8z" fill="url(#fgr)" stroke="#9c9c9c" stroke-width="0.9" stroke-linejoin="round"/><path d="M9.2 2.6 C10.4 0.9 13 0.9 13.9 3" fill="none" stroke="#a4a4a4" stroke-width="1"/><path d="M12.2 3.6 H14.6 V1.2" fill="none" stroke="#a4a4a4" stroke-width="0.9"/></svg></div>
<a class="t" style="--k:0.8604;left:16px;top:778px">View VisualGDB build variables for this configuration</a>
<div class="btn" style="left:780px;top:773px;width:71px;height:20px"><span class="t tc" style="top:4px;right:2px">OK</span></div>
<div class="btn" style="left:859px;top:773px;width:72px;height:20px"><span class="t tc" style="top:4px;right:3px">Cancel</span></div>
<div class="btn dis" style="left:938px;top:773px;width:72px;height:20px"><span class="t tc" style="top:4px">Apply</span></div>
<div id="win"></div>
</body>
</html>
